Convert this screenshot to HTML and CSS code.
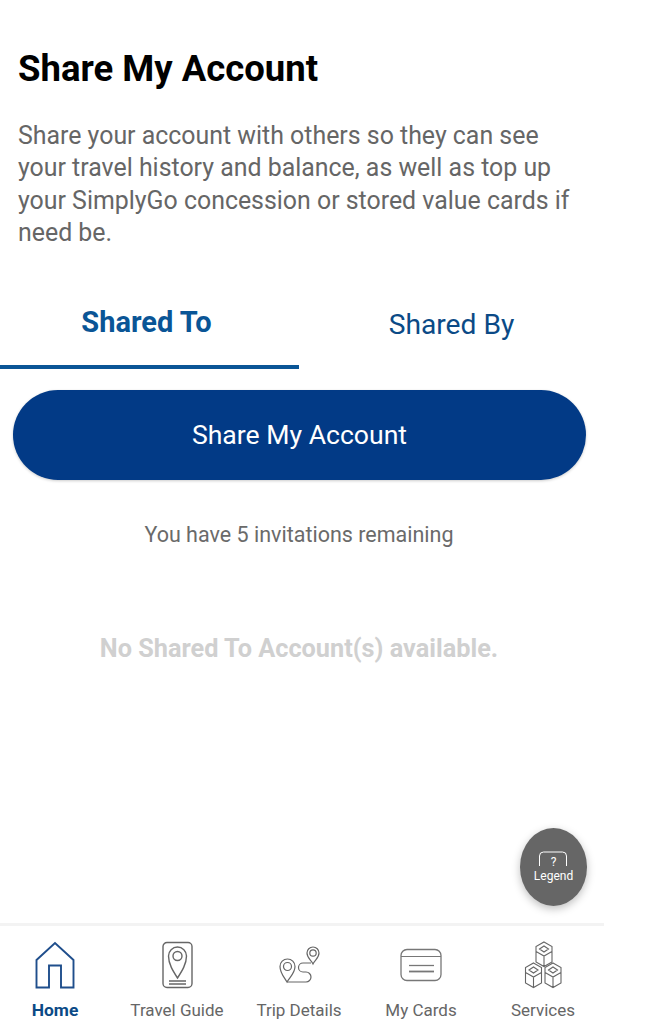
FILE: index.html
```html
<!DOCTYPE html>
<html lang="en">
<head>
<meta charset="utf-8">
<title>Share My Account</title>
<link rel="stylesheet" href="styles.css">
</head>
<body>
<div class="screen">
  <main class="content">
    <h1 class="title">Share My Account</h1>
    <p class="intro">Share your account with others so they can see your travel history and balance, as well as top up your SimplyGo concession or stored value cards if need be.</p>
    <div class="tabs">
      <div class="tab tab-active">Shared To</div>
      <div class="tab tab-other">Shared By</div>
    </div>
    <button class="share-btn">Share My Account</button>
    <p class="remaining">You have 5 invitations remaining</p>
    <p class="empty">No Shared To Account(s) available.</p>
  </main>
  <div class="legend">
    <svg class="legend-icon" viewBox="0 0 30 16" width="30" height="16" fill="none" stroke="#fff" stroke-width="1"><path d="M1.5 16V6a4 4 0 0 1 4-4h19a4 4 0 0 1 4 4v10"/></svg>
    <span class="legend-q">?</span>
    <span class="legend-text">Legend</span>
  </div>
  <nav class="nav">
    <div class="nav-item nav-home">
      <svg width="42" height="48" viewBox="0 0 42 48" fill="none" stroke="#1f4e8c" stroke-width="1.9"><path d="M15 46.5H2.5V19L21 2l18.5 17v27.500H27V24.500H15z"/></svg>
      <span>Home</span>
    </div>
    <div class="nav-item">
      <svg width="42" height="48" viewBox="0 0 42 48" fill="none" stroke="#666" stroke-width="1.4"><rect x="7" y="1.500" width="29" height="45" rx="4"/><path d="M21.500 37C17 30 12.500 23 12.500 15a9 9 0 0 1 18 0c0 8-4.500 15-9 22z"/><circle cx="21.500" cy="15" r="4.500"/><path d="M13 40h17M13 43h17"/></svg>
      <span>Travel Guide</span>
    </div>
    <div class="nav-item">
      <svg width="42" height="48" viewBox="0 0 42 48" fill="none" stroke="#666" stroke-width="1.2"><path d="M9 41C6 36 2 32 2 25.500a7.500 7.500 0 0 1 15 0C17 32 12 36 9 41z"/><circle cx="9.500" cy="25.500" r="4"/><path d="M35 23c-2-4-6-6-6-11a6 6 0 0 1 12 0c0 5-4 7-6 11z"/><circle cx="35" cy="12" r="3.200"/><path d="M9 41h19a5 5 0 0 0 0-10h-3a4.500 4.500 0 0 1 0-9h8"/></svg>
      <span>Trip Details</span>
    </div>
    <div class="nav-item">
      <svg width="42" height="48" viewBox="0 0 42 48" fill="none" stroke="#777" stroke-width="1.3"><rect x="1" y="8.500" width="40" height="31" rx="6"/><path d="M1 15.500h40" stroke-width="1"/><path d="M9 24.500h25"/><path d="M9 30.500h25" stroke-width="1.800"/></svg>
      <span>My Cards</span>
    </div>
    <div class="nav-item">
      <svg width="42" height="48" viewBox="0 0 42 48" fill="none" stroke="#666" stroke-width="1.1"><path d="M22 1l8 4.500v5L22 15l-8-4.500v-5zM14 10.500V21l8 4.500 8-4.500V10.500M22 15v10.500M17.500 8l4.500-3 4.500 3-4.500 3z"/><path d="M11.500 22l8 4.500v5l-8 4.500-8-4.500v-5zM3.500 31.500V42l8 4.500 8-4.500V31.500M11.500 36v10.500M7 29l4.500-3 4.500 3-4.500 3z"/><path d="M31 22l8 4.500v5L31 36l-8-4.500v-5zM23 31.500V42l8 4.500 8-4.500V31.500M31 36v10.500M26.500 29l4.500-3 4.500 3-4.500 3z"/></svg>
      <span>Services</span>
    </div>
  </nav>
</div>
</body>
</html>
```
FILE: styles.css
```css
* { box-sizing: border-box; }
html, body { margin: 0; padding: 0; background: #fff; }
body { font-family: Roboto, "Noto Sans", sans-serif; }
.screen { position: relative; width: 658px; height: 1024px; overflow: hidden; display: flex; flex-direction: column; }
.content { width: 603px; height: 923px; display: flex; flex-direction: column; background: #fff; }
.title { margin: 47px 0 0 18px; font-size: 36.5px; line-height: 44px; font-weight: 700; color: #000; }
.intro { margin: 29px 30px 0 18px; font-size: 24.9px; line-height: 32.4px; color: #666; }
.tabs { display: flex; margin-top: 40px; height: 79px; width: 598px; }
.tab { flex: 1; text-align: center; font-size: 28.2px; color: #0b4a86; padding-top: 15px; line-height: 40px; }
.tab-other { padding-left: 6px; }
.tab-active { font-weight: 700; color: #0a5596; padding-top: 12px; padding-right: 6px; border-bottom: 4px solid #0a5596; font-size: 29px; }
.share-btn { display: block; margin: 21px 0 0 13px; width: 573px; height: 90px; border: 0; border-radius: 45px; background: #023a86; color: #fff; font: 400 26.6px Roboto, sans-serif; box-shadow: 0 1px 3px rgba(0,0,0,.2); }
.remaining { margin: 40px 0 0; width: 598px; text-align: center; font-size: 21.5px; line-height: 30px; color: #6a6a6a; }
.empty { margin: 83px 0 0; width: 598px; text-align: center; font-size: 25.3px; line-height: 32px; font-weight: 700; color: #d0d0d0; }
.legend { position: absolute; left: 520px; top: 828px; width: 67px; height: 78px; border-radius: 50%; background: #666; color: #fff; box-shadow: 0 3px 8px rgba(0,0,0,.25); display: flex; flex-direction: column; align-items: center; }
.legend-icon { position: absolute; top: 22px; left: 18px; }
.legend-q { margin-top: 27px; font-size: 12px; line-height: 14px; }
.legend-text { font-size: 12px; line-height: 14px; margin-top: 0; }
.nav { width: 610px; margin-left: -6px; height: 101px; border-top: 3px solid #f3f3f3; display: flex; padding-top: 15px; }
.nav-item { flex: 1; display: flex; flex-direction: column; align-items: center; color: #666; font-size: 17px; line-height: 26px; white-space: nowrap; gap: 8px; }
.nav-item span { display: block; }
.nav-home { color: #0b4a86; font-weight: 700; font-size: 17.4px; }
```
